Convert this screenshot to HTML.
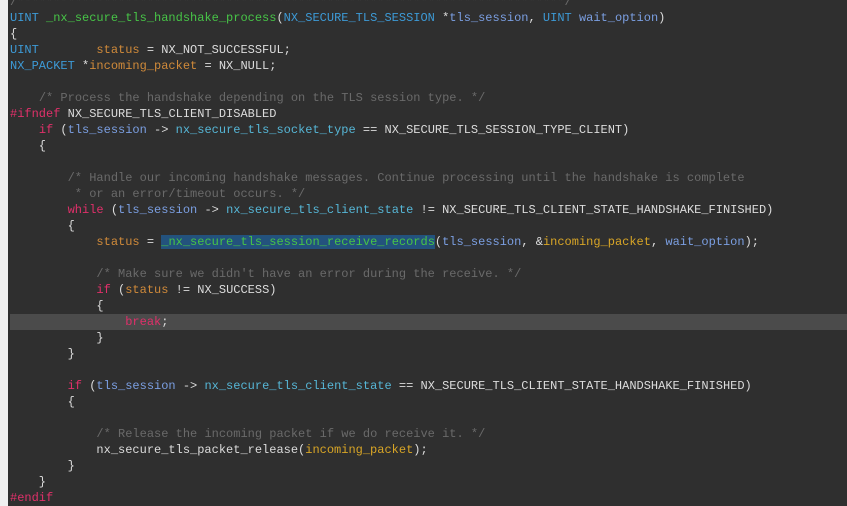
<!DOCTYPE html>
<html><head><style>
html,body{margin:0;padding:0;}
body{width:847px;height:506px;background:#2f2f2f;position:relative;overflow:hidden;font-family:"Liberation Mono",monospace;font-size:12px;}
.g{position:absolute;left:0;top:0;width:8px;height:506px;background:#f0f0f0;}
.hl{position:absolute;left:10px;top:314px;width:837px;height:16px;background:#4b4b4b;}
pre{position:absolute;left:10px;top:-6px;margin:0;font-family:"Liberation Mono",monospace;font-size:12px;line-height:16px;color:#dcdcdc;white-space:pre;}
.k{color:#3d9ad6}.f{color:#47c447}.c{color:#6a6a6a}.v{color:#d08a3a}.m{color:#e0306a}.p{color:#7b9fe2}.d{color:#56b6d6}.y{color:#d8a526}
.s{background:#23527d}
</style></head><body>
<div class="g"></div>
<div class="hl"></div>
<pre><span class="c">/****************************************************************************/</span>
<span class="k">UINT</span> <span class="f">_nx_secure_tls_handshake_process</span>(<span class="k">NX_SECURE_TLS_SESSION</span> *<span class="p">tls_session</span>, <span class="k">UINT</span> <span class="p">wait_option</span>)
{
<span class="k">UINT</span>        <span class="v">status</span> = NX_NOT_SUCCESSFUL;
<span class="k">NX_PACKET</span> *<span class="v">incoming_packet</span> = NX_NULL;

    <span class="c">/* Process the handshake depending on the TLS session type. */</span>
<span class="m">#ifndef</span> NX_SECURE_TLS_CLIENT_DISABLED
    <span class="m">if</span> (<span class="p">tls_session</span> -&gt; <span class="d">nx_secure_tls_socket_type</span> == NX_SECURE_TLS_SESSION_TYPE_CLIENT)
    {

        <span class="c">/* Handle our incoming handshake messages. Continue processing until the handshake is complete</span>
<span class="c">         * or an error/timeout occurs. */</span>
        <span class="m">while</span> (<span class="p">tls_session</span> -&gt; <span class="d">nx_secure_tls_client_state</span> != NX_SECURE_TLS_CLIENT_STATE_HANDSHAKE_FINISHED)
        {
            <span class="v">status</span> = <span class="f s">_nx_secure_tls_session_receive_records</span>(<span class="p">tls_session</span>, &amp;<span class="y">incoming_packet</span>, <span class="p">wait_option</span>);

            <span class="c">/* Make sure we didn't have an error during the receive. */</span>
            <span class="m">if</span> (<span class="v">status</span> != NX_SUCCESS)
            {
                <span class="m">break</span>;
            }
        }

        <span class="m">if</span> (<span class="p">tls_session</span> -&gt; <span class="d">nx_secure_tls_client_state</span> == NX_SECURE_TLS_CLIENT_STATE_HANDSHAKE_FINISHED)
        {

            <span class="c">/* Release the incoming packet if we do receive it. */</span>
            nx_secure_tls_packet_release(<span class="y">incoming_packet</span>);
        }
    }
<span class="m">#endif</span></pre>
</body></html>
